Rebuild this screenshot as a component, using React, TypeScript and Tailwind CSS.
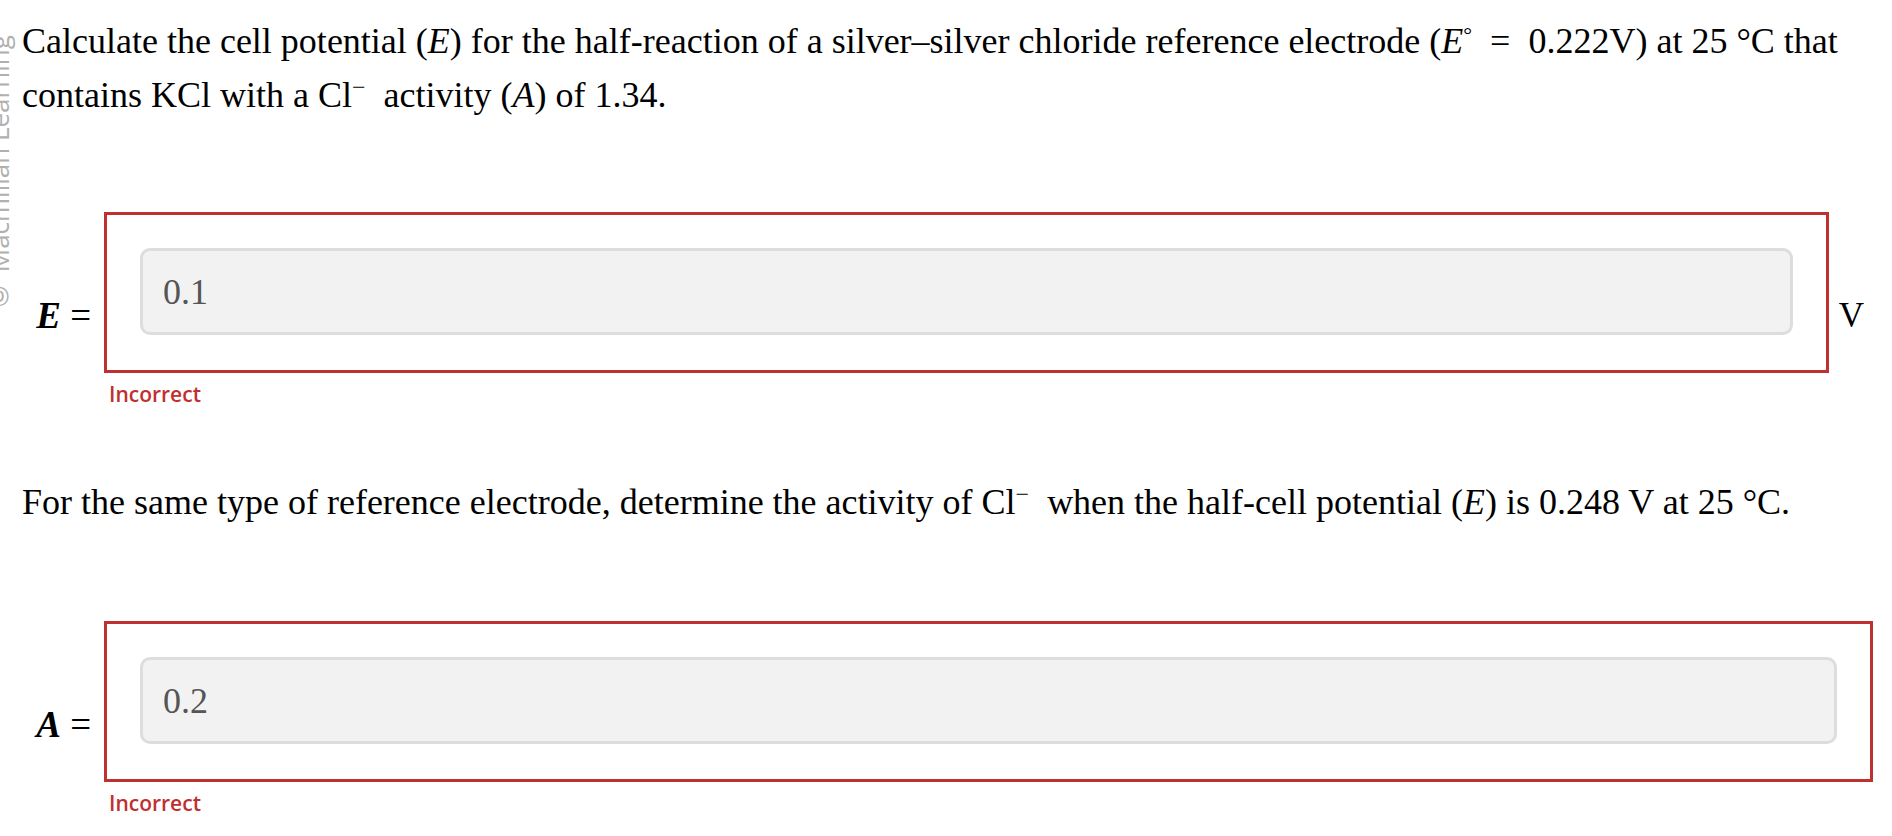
export default function App() {
  return (
    <div className="relative min-h-screen overflow-hidden bg-white font-['Liberation_Serif',serif] text-black">
      {/* Watermark */}
      <div className="absolute left-[-14px] top-[5px] h-[310px] rotate-180 font-['Open_Sans',sans-serif] text-[26px] leading-none text-[#b0b0b0] [writing-mode:vertical-rl]">
        © Macmillan Learning
      </div>

      <div className="pl-[22px] pr-[19px] pt-[14px]">
        <p className="text-[36px] leading-[54px]">
          Calculate the cell potential (<i>E</i>) for the half-reaction of a silver–silver chloride reference electrode (
          <i>E</i>
          <sup className="text-[22px]">°</sup>&nbsp;&nbsp;=&nbsp;&nbsp;0.222V) at 25 °C that contains KCl with a Cl
          <sup className="text-[24px]">−</sup>&nbsp; activity (<i>A</i>) of 1.34.
        </p>

        <div className="mt-[90px] flex items-end">
          <div className="mb-[39px] w-[82px] pr-[13px] text-right text-[37px] leading-none">
            <i className="font-bold">E</i> =
          </div>
          <div className="flex-1 border-[3px] border-[#c0302f] px-[33px] pb-[35px] pt-[33px]">
            <div className="flex h-[87px] items-center rounded-[10px] border-[3px] border-[#dddddd] bg-[#f2f2f2] pl-[20px] text-[36px] text-[#555555]">
              0.1
            </div>
          </div>
          <div className="mb-[40px] ml-[10px] mr-[9px] text-[35px] leading-none">V</div>
        </div>
        <p className="ml-[87px] mt-[8px] font-['Open_Sans',sans-serif] text-[21px] font-semibold leading-[26px] text-[#c0302f]">
          Incorrect
        </p>

        <p className="mt-[68px] text-[36px] leading-[54px]">
          For the same type of reference electrode, determine the activity of Cl
          <sup className="text-[24px]">−</sup>&nbsp; when the half-cell potential (<i>E</i>) is 0.248 V at 25 °C.
        </p>

        <div className="mt-[92px] flex items-end">
          <div className="mb-[39px] w-[82px] pr-[13px] text-right text-[37px] leading-none">
            <i className="font-bold">A</i> =
          </div>
          <div className="flex-1 border-[3px] border-[#c0302f] px-[33px] pb-[35px] pt-[33px]">
            <div className="flex h-[87px] items-center rounded-[10px] border-[3px] border-[#dddddd] bg-[#f2f2f2] pl-[20px] text-[36px] text-[#555555]">
              0.2
            </div>
          </div>
        </div>
        <p className="ml-[87px] mt-[8px] font-['Open_Sans',sans-serif] text-[21px] font-semibold leading-[26px] text-[#c0302f]">
          Incorrect
        </p>
      </div>
    </div>
  );
}
